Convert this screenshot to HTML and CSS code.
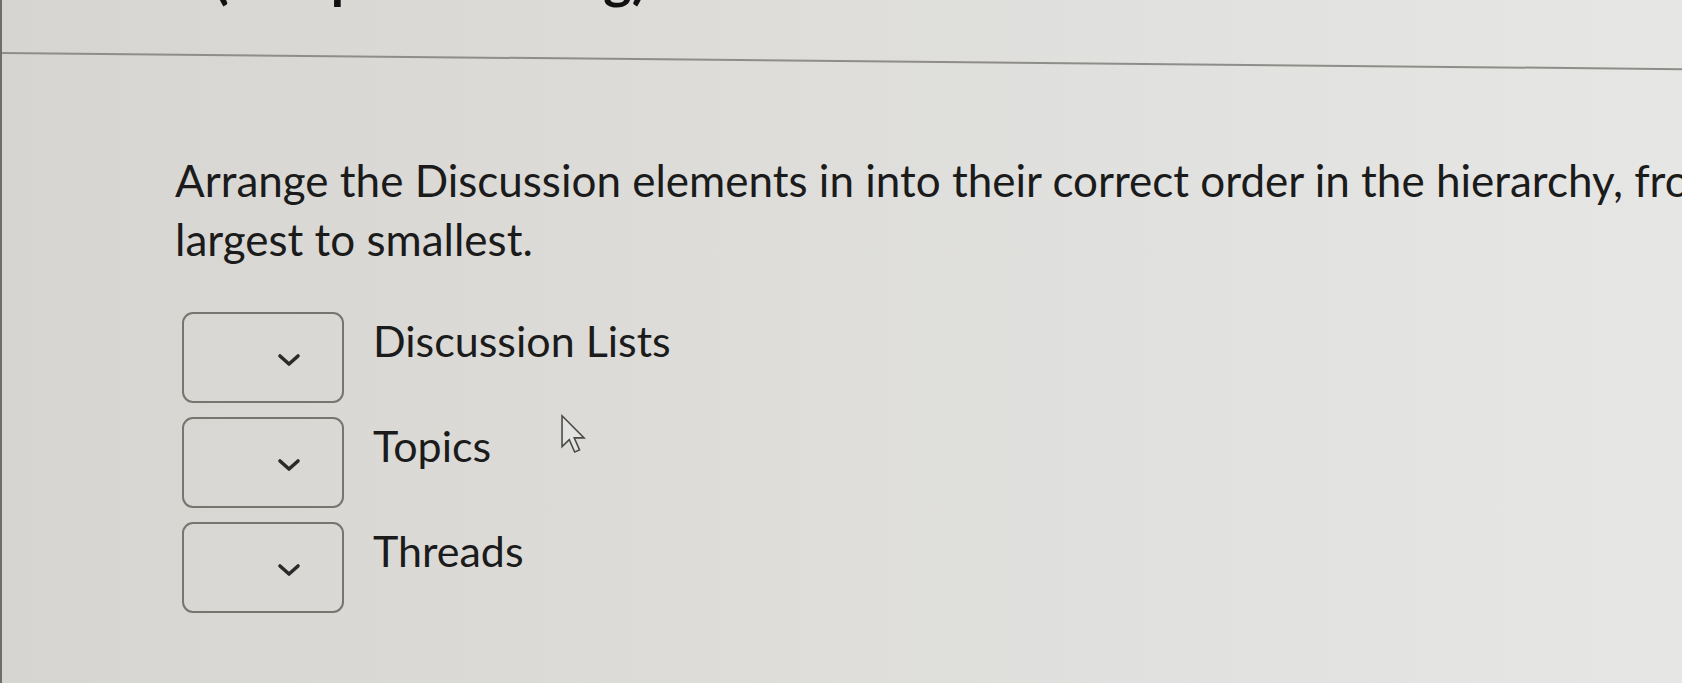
FILE: index.html
```html
<!DOCTYPE html>
<html lang="en">
<head>
<meta charset="utf-8">
<title>Discussion hierarchy question</title>
<link rel="stylesheet" href="styles.css">
</head>
<body>
<div class="page">
  <h2 class="q-title">(Sample Ordering)</h2>
  <hr class="rule">
  <section class="question">
    <p class="prompt">Arrange the Discussion elements in into their correct order in the hierarchy, from largest to smallest.</p>
    <div class="items">
      <div class="item">
        <div class="select"><svg class="chev" viewBox="0 0 24 14" width="24" height="14"><path d="M3 3 L12 11 L21 3" /></svg></div>
        <span class="label">Discussion Lists</span>
      </div>
      <div class="item">
        <div class="select"><svg class="chev" viewBox="0 0 24 14" width="24" height="14"><path d="M3 3 L12 11 L21 3" /></svg></div>
        <span class="label">Topics</span>
      </div>
      <div class="item">
        <div class="select"><svg class="chev" viewBox="0 0 24 14" width="24" height="14"><path d="M3 3 L12 11 L21 3" /></svg></div>
        <span class="label">Threads</span>
      </div>
    </div>
  </section>
  <svg class="cursor" viewBox="0 0 22 34" width="27" height="41"><path d="M1.5 1.5 L1.5 27 L7.5 21.2 L12 31.5 L16 29.8 L11.6 19.8 L19.8 19.8 Z"/></svg>
</div>
</body>
</html>
```
FILE: styles.css
```css
html, body {
  margin: 0;
  padding: 0;
}
body {
  width: 1682px;
  height: 683px;
  overflow: hidden;
  background: linear-gradient(90deg, #d6d5d1 0%, #dcdbd8 35%, #e1e1df 70%, #e6e6e4 100%);
  font-family: Lato, "Noto Sans", sans-serif;
  color: #1b1b1b;
}
.page {
  position: relative;
  display: flow-root;
  height: 683px;
  border-left: 2px solid #6d6d69;
  box-sizing: border-box;
}
.q-title {
  margin: -52px 0 0 0;
  padding-left: 212px;
  font-size: 54px;
  line-height: 60px;
  font-weight: 700;
  color: #111;
  white-space: nowrap;
}
.rule {
  margin: 44px 0 0 0;
  border: 0;
  height: 2px;
  background: #8e8d89;
  width: 1700px;
  transform-origin: 0 0;
  transform: rotate(0.55deg);
}
.question {
  padding-left: 173px;
}
.prompt {
  margin: 97px 0 0 0;
  font-size: 44px;
  line-height: 59px;
  width: 1560px;
}
.items {
  margin-top: 43px;
  display: flex;
  flex-direction: column;
  gap: 14px;
}
.item {
  display: flex;
  align-items: flex-start;
  gap: 29px;
  padding-left: 7px;
}
.select {
  width: 162px;
  height: 91px;
  box-sizing: border-box;
  border: 2px solid #76756f;
  border-radius: 11px;
  display: flex;
  align-items: center;
  justify-content: flex-end;
  padding: 4px 41px 0 0;
}
.chev path {
  fill: none;
  stroke: #2a2a2a;
  stroke-width: 3.6;
  stroke-linecap: round;
  stroke-linejoin: round;
}
.label {
  font-size: 43px;
  line-height: 58px;
}
.cursor {
  position: absolute;
  left: 558px;
  top: 414px;
}
.cursor path {
  fill: #e3e3e1;
  stroke: #4a4a48;
  stroke-width: 1.3;
  stroke-linejoin: miter;
}
```
